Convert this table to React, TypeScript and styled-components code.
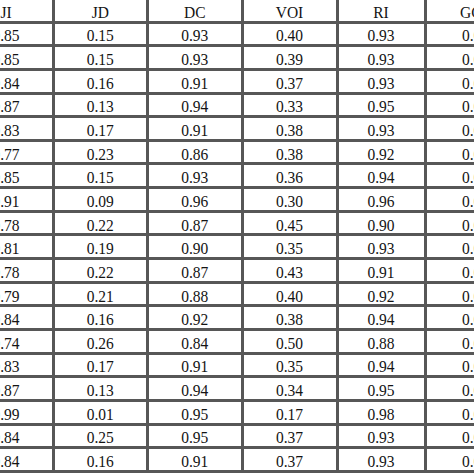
import React from 'react';
import styled, { createGlobalStyle } from 'styled-components';

const GRID_LINE = '#575757';

const GlobalStyle = createGlobalStyle`
  html, body {
    margin: 0;
    padding: 0;
    background: #ffffff;
    overflow: hidden;
  }
`;

const Page = styled.div`
  width: 474px;
  height: 474px;
  overflow: hidden;
  background: #ffffff;
`;

const Table = styled.div`
  display: grid;
  grid-template-columns: 91px 91.5px 91.5px 92px 85px 98px;
  grid-auto-rows: 20.65px;
  gap: 3px;
  padding: 3px;
  width: max-content;
  margin: -3px 0 0 -42.5px;
  background: ${GRID_LINE};
`;

const Cell = styled.div`
  background: #ffffff;
  display: flex;
  align-items: center;
  justify-content: center;
  padding-top: 3px;
  box-sizing: border-box;
  overflow: hidden;
  font-family: 'Liberation Serif', 'Times New Roman', serif;
  font-size: 15.5px;
  color: #141414;
  white-space: nowrap;
`;

const Label = styled.span`
  display: inline-block;
  transform: scaleY(1.12);
`;

const headers = ['JI', 'JD', 'DC', 'VOI', 'RI', 'GCE'];

// JI, JD, DC, VOI, RI, GCE
const rows: string[][] = [
  ['0.85', '0.15', '0.93', '0.40', '0.93', '0.05'],
  ['0.85', '0.15', '0.93', '0.39', '0.93', '0.05'],
  ['0.84', '0.16', '0.91', '0.37', '0.93', '0.06'],
  ['0.87', '0.13', '0.94', '0.33', '0.95', '0.04'],
  ['0.83', '0.17', '0.91', '0.38', '0.93', '0.06'],
  ['0.77', '0.23', '0.86', '0.38', '0.92', '0.07'],
  ['0.85', '0.15', '0.93', '0.36', '0.94', '0.05'],
  ['0.91', '0.09', '0.96', '0.30', '0.96', '0.03'],
  ['0.78', '0.22', '0.87', '0.45', '0.90', '0.08'],
  ['0.81', '0.19', '0.90', '0.35', '0.93', '0.06'],
  ['0.78', '0.22', '0.87', '0.43', '0.91', '0.08'],
  ['0.79', '0.21', '0.88', '0.40', '0.92', '0.07'],
  ['0.84', '0.16', '0.92', '0.38', '0.94', '0.05'],
  ['0.74', '0.26', '0.84', '0.50', '0.88', '0.09'],
  ['0.83', '0.17', '0.91', '0.35', '0.94', '0.06'],
  ['0.87', '0.13', '0.94', '0.34', '0.95', '0.04'],
  ['0.99', '0.01', '0.95', '0.17', '0.98', '0.01'],
  ['0.84', '0.25', '0.95', '0.37', '0.93', '0.06'],
  ['0.84', '0.16', '0.91', '0.37', '0.93', '0.06'],
];

const App: React.FC = () => {
  return (
    <>
      <GlobalStyle />
      <Page>
        <Table>
          {headers.map((h) => (
            <Cell key={h}>
              <Label>{h}</Label>
            </Cell>
          ))}
          {rows.map((row, r) =>
            row.map((value, c) => (
              <Cell key={`${r}-${c}`}>
                <Label>{value}</Label>
              </Cell>
            )),
          )}
        </Table>
      </Page>
    </>
  );
};

export default App;
